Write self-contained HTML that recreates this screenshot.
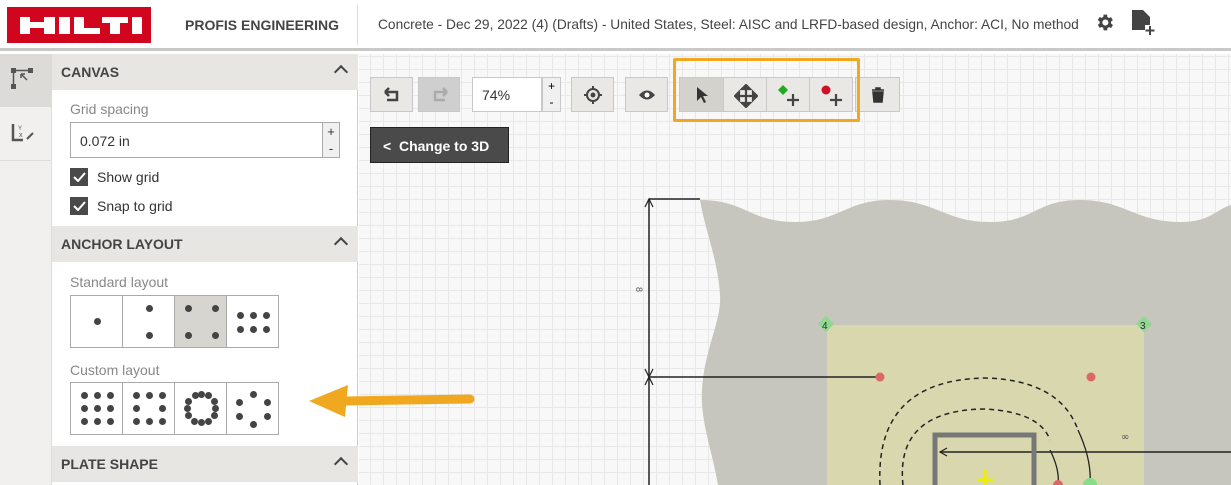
<!DOCTYPE html>
<html><head><style>
*{margin:0;padding:0;box-sizing:border-box}
body{width:1231px;height:485px;overflow:hidden;font-family:"Liberation Sans",Arial,sans-serif;background:#fff;position:relative}
.hdr{position:absolute;left:0;top:0;width:1231px;height:51px;background:#fff;border-bottom:3px solid #c8c8c8}
.logo{position:absolute;left:7px;top:7px;width:144px;height:36px;background:#d2051e}
.pe{position:absolute;left:185px;top:17px;font-size:14px;font-weight:bold;color:#444}
.sep{position:absolute;left:357px;top:5px;width:1px;height:40px;background:#ddd}
.title{position:absolute;left:378px;top:17px;font-size:13.75px;color:#444}
.side{position:absolute;left:0;top:54px;width:52px;height:431px;background:#f1f0ee;border-right:1px solid #ddd}
.panel{position:absolute;left:52px;top:54px;width:306px;height:431px;background:#fff;border-right:1px solid #ccc}
.sh{position:absolute;left:0;width:306px;height:36px;background:#e7e6e2;font-size:14px;font-weight:bold;color:#444;padding:10px 9px}
.car{position:absolute;right:12px;top:13px;width:10px;height:10px;border-left:2.5px solid #444;border-top:2.5px solid #444;transform:rotate(45deg)}
.lbl{position:absolute;left:18px;font-size:14px;color:#888}
.cb{position:absolute;left:18px;width:18px;height:18px;background:#4a4a4a}
.cbt{position:absolute;left:45px;font-size:14px;color:#333}
.grid4{position:absolute;left:18px;display:flex}
.grid4 div{width:53px;height:53px;border:1px solid #aaa;margin-right:-1px;position:relative;background:#fff}
.d{position:absolute;width:7px;height:7px;border-radius:50%;background:#444}
.canvas{position:absolute;left:359px;top:54px;width:872px;height:431px;background-color:#f8f8f8;
background-image:linear-gradient(#e8e8e8 1px,transparent 1px),linear-gradient(90deg,#e8e8e8 1px,transparent 1px);background-size:13px 13px;background-position:-2px 2px;overflow:hidden}
.btn{position:absolute;top:23px;height:35px;background:#e9e8e4;border:1px solid #c8c8c8}
</style></head><body>
<div class="hdr">
 <div class="logo"><svg width="144" height="36" viewBox="0 0 144 36"><g fill="#fff"><rect x="13" y="10" width="10" height="17"/><rect x="23" y="15" width="14" height="6"/><rect x="37" y="10" width="11" height="17"/><rect x="52" y="10" width="11" height="17"/><rect x="67" y="10" width="10" height="17"/><rect x="77" y="21" width="16" height="6"/><rect x="95" y="10" width="26" height="6"/><rect x="103" y="16" width="10" height="11"/><rect x="125" y="10" width="10" height="17"/></g></svg></div>
 <div class="pe">PROFIS ENGINEERING</div>
 <div class="sep"></div>
 <div class="title">Concrete - Dec 29, 2022 (4) (Drafts) - United States, Steel: AISC and LRFD-based design, Anchor: ACI, No method</div>
 <svg style="position:absolute;left:1094px;top:12px" width="21" height="21" viewBox="0 0 24 24"><path fill="#444" d="M19.4 13a7.5 7.5 0 0 0 0-2l2.1-1.6-2-3.5-2.5 1a7 7 0 0 0-1.700-1L15 3h-4l-.4 2.7a7 7 0 0 0-1.7 1l-2.5-1-2 3.5L6.5 11a7.5 7.5 0 0 0 0 2l-2.1 1.6 2 3.5 2.5-1a7 7 0 0 0 1.7 1L11 21h4l.4-2.7a7 7 0 0 0 1.7-1l2.5 1 2-3.5zM13 15.5a3.5 3.5 0 1 1 0-7 3.5 3.5 0 0 1 0 7z"/></svg>
 <svg style="position:absolute;left:1131px;top:10px" width="25" height="26" viewBox="0 0 25 26"><path fill="#444" d="M1 0h11l7 7v8h-5v5H1z"/><path stroke="#444" stroke-width="2" d="M19 16v9M14.5 20.5h9"/></svg>
</div>
<div class="side">
 <div style="position:absolute;left:0;top:0;width:52px;height:53px;background:#dcdbd7"></div>
 <svg style="position:absolute;left:11px;top:14px" width="24" height="22"><rect x="0" y="0" width="5" height="5" fill="#555"/><rect x="17" y="0" width="5" height="5" fill="#555"/><rect x="0" y="16" width="5" height="5" fill="#555"/><path d="M5 2.5h12M2.5 5v11M10 6l6 6M10 6v4M10 6h4" stroke="#555" stroke-width="1.5" fill="none"/></svg>
 <div style="position:absolute;left:0;top:106px;width:52px;height:1px;background:#ddd"></div>
 <svg style="position:absolute;left:11px;top:68px" width="26" height="22"><path d="M2 2v16h10" stroke="#555" stroke-width="2.5" fill="none"/><text x="7" y="8" font-size="6" fill="#555" font-family="Liberation Sans">Y</text><text x="8" y="15" font-size="7" fill="#555" font-family="Liberation Sans">x</text><path d="M16 17l6-6" stroke="#555" stroke-width="2"/></svg>
</div>
<div class="panel">
 <div class="sh" style="top:0">CANVAS<span class="car"></span></div>
 <div class="lbl" style="top:47px">Grid spacing</div>
 <div style="position:absolute;left:18px;top:68px;width:270px;height:36px;border:1px solid #aaa;font-size:14px;color:#333;padding:10px 9px">0.072 in</div>
 <div style="position:absolute;left:270px;top:68px;width:18px;height:36px;border:1px solid #aaa;background:#f0f0f0;font-size:13px;text-align:center;line-height:17px;color:#333">+<br>-</div>
 <div class="cb" style="top:114px"></div><svg style="position:absolute;left:21px;top:118px" width="13" height="10"><path d="M1 5l4 4 7-8" stroke="#fff" stroke-width="2" fill="none"/></svg><div class="cbt" style="top:115px">Show grid</div>
 <div class="cb" style="top:143px"></div><svg style="position:absolute;left:21px;top:147px" width="13" height="10"><path d="M1 5l4 4 7-8" stroke="#fff" stroke-width="2" fill="none"/></svg><div class="cbt" style="top:144px">Snap to grid</div>
 <div class="sh" style="top:172px">ANCHOR LAYOUT<span class="car"></span></div>
 <div class="lbl" style="top:220px">Standard layout</div>
 <div class="grid4" style="top:241px">
  <div><span class="d" style="left:23px;top:22px"></span></div>
  <div><span class="d" style="left:23px;top:9px"></span><span class="d" style="left:23px;top:36px"></span></div>
  <div style="background:#d6d5d0"><span class="d" style="left:10px;top:9px"></span><span class="d" style="left:37px;top:9px"></span><span class="d" style="left:10px;top:36px"></span><span class="d" style="left:37px;top:36px"></span></div>
  <div><span class="d" style="left:10px;top:16px"></span><span class="d" style="left:23px;top:16px"></span><span class="d" style="left:36px;top:16px"></span><span class="d" style="left:10px;top:30px"></span><span class="d" style="left:23px;top:30px"></span><span class="d" style="left:36px;top:30px"></span></div>
 </div>
 <div class="lbl" style="top:308px">Custom layout</div>
 <div class="grid4" style="top:328px">
  <div><span class="d" style="left:10px;top:9px"></span><span class="d" style="left:23px;top:9px"></span><span class="d" style="left:36px;top:9px"></span><span class="d" style="left:10px;top:22px"></span><span class="d" style="left:23px;top:22px"></span><span class="d" style="left:36px;top:22px"></span><span class="d" style="left:10px;top:35px"></span><span class="d" style="left:23px;top:35px"></span><span class="d" style="left:36px;top:35px"></span></div>
  <div><span class="d" style="left:10px;top:9px"></span><span class="d" style="left:23px;top:9px"></span><span class="d" style="left:36px;top:9px"></span><span class="d" style="left:10px;top:22px"></span><span class="d" style="left:36px;top:22px"></span><span class="d" style="left:10px;top:35px"></span><span class="d" style="left:23px;top:35px"></span><span class="d" style="left:36px;top:35px"></span></div>
  <div><span class="d" style="left:17px;top:9px"></span><span class="d" style="left:23px;top:8px"></span><span class="d" style="left:30px;top:9px"></span><span class="d" style="left:10px;top:15px"></span><span class="d" style="left:36px;top:15px"></span><span class="d" style="left:9px;top:22px"></span><span class="d" style="left:37px;top:22px"></span><span class="d" style="left:10px;top:29px"></span><span class="d" style="left:36px;top:29px"></span><span class="d" style="left:16px;top:35px"></span><span class="d" style="left:23px;top:36px"></span><span class="d" style="left:30px;top:35px"></span></div>
  <div><span class="d" style="left:23px;top:8px"></span><span class="d" style="left:9px;top:16px"></span><span class="d" style="left:37px;top:16px"></span><span class="d" style="left:9px;top:30px"></span><span class="d" style="left:37px;top:30px"></span><span class="d" style="left:23px;top:38px"></span></div>
 </div>
 <div class="sh" style="top:392px">PLATE SHAPE<span class="car"></span></div>
</div>
<div class="canvas">
 <svg style="position:absolute;left:0;top:0" width="872" height="431" viewBox="359 54 872 431">
  <path d="M700 200 C745 200 750 222 795 222 C840 222 845 200 890 200 C935 200 945 222 990 222 C1035 222 1035 200 1080 200 C1125 200 1135 222 1180 222 C1210 222 1215 210 1231 205 V485 H718 C712 450 700 420 702 390 C704 350 722 320 720 295 C718 260 705 230 700 200Z" fill="#c6c5be"/>
  <rect x="827" y="325" width="317" height="160" fill="#d9d7ae"/>
  <path d="M649 199H700M649 199V485M649 377H880M1231 452H940" stroke="#222" stroke-width="1.5" fill="none"/>
  <path d="M645 207l4-8 4 8M645 369l4 8 4-8M645 385l4-8 4 8M947 448l-7 4 7 4" stroke="#222" stroke-width="1.2" fill="none"/>
  <circle cx="880" cy="377" r="4.5" fill="#d66"/><circle cx="1091" cy="377" r="4.5" fill="#d66"/>
  <path d="M880 485 Q875 380 985 378 Q1060 380 1078 430 M903 485 Q895 410 985 409 Q1040 412 1050 440" stroke="#222" stroke-width="1.5" stroke-dasharray="5 4" fill="none"/>
  <path d="M1078 430 Q1092 460 1090 485M1050 450 Q1060 470 1058 485" stroke="#222" stroke-width="1.3" fill="none"/>
  <rect x="935" y="435" width="99" height="60" fill="none" stroke="#777" stroke-width="5"/>
  <circle cx="1058" cy="485" r="5" fill="#d66"/><circle cx="1090" cy="485" r="7" fill="#8d8"/>
  <path d="M985 470v15M977 480h16" stroke="#ee0" stroke-width="3"/>
  <path d="M826 316l8 8-8 8-8-8z M1144 316l8 8-8 8-8-8z" fill="#8fd88f"/>
  <text x="822" y="329" font-size="10" font-family="Liberation Sans" fill="#333">4</text>
  <text x="1140" y="329" font-size="10" font-family="Liberation Sans" fill="#333">3</text>
  <text x="636" y="287" font-size="9" fill="#555" transform="rotate(90 636 287)" font-family="Liberation Sans">8</text>
  <text x="1121" y="440" font-size="10" fill="#555" font-family="DejaVu Sans">∞</text>
 </svg>
 <div class="btn" style="left:11px;width:43px"><svg style="margin:9px 12px" width="18" height="16"><path d="M2 5h12v8H4M2 5l4-4M2 5l4 4" stroke="#444" stroke-width="2.5" fill="none"/></svg></div>
 <div class="btn" style="left:59px;width:42px;background:#cfcfcf"><svg style="margin:9px 12px" width="18" height="16"><path d="M16 5H4v8h10M16 5l-4-4M16 5l-4 4" stroke="#aaa" stroke-width="2.5" fill="none"/></svg></div>
 <div class="btn" style="left:113px;width:70px;background:#fff;font-size:14px;color:#333;padding:9px 0 0 9px">74%</div>
 <div style="position:absolute;left:183px;top:23px;width:19px;height:35px;border:1px solid #c8c8c8;background:#f0f0f0;font-size:12px;text-align:center;line-height:16px">+<br>-</div>
 <div class="btn" style="left:212px;width:43px"><svg style="margin:8px 12px" width="18" height="18"><circle cx="9" cy="9" r="6" stroke="#444" stroke-width="2" fill="none"/><circle cx="9" cy="9" r="2.5" fill="#444"/><path d="M9 0v3M9 15v3M0 9h3M15 9h3" stroke="#444" stroke-width="2"/></svg></div>
 <div class="btn" style="left:266px;width:43px"><svg style="margin:10px 12px" width="18" height="14"><path d="M1 7Q9-2 17 7Q9 16 1 7z" fill="#444"/><circle cx="9" cy="7" r="2.5" fill="#fff"/></svg></div>
 <div class="btn" style="left:320px;width:45px;background:#d3d2cc"><svg style="margin:8px 15px" width="14" height="18"><path d="M2 1v14l4-4 3 6 2-1-3-6h5z" fill="#333"/></svg></div>
 <div class="btn" style="left:364px;width:44px"><svg style="margin:6px 10px" width="24" height="24"><path d="M12 1v22M1 12h22M12 1l-4 4h8zM12 23l-4-4h8zM1 12l4-4v8zM23 12l-4-4v8z" stroke="#444" stroke-width="2.2" fill="#444"/></svg></div>
 <div class="btn" style="left:407px;width:44px"><svg style="margin:6px 10px" width="26" height="24"><path d="M6 1l5 5-5 5-5-5z" fill="#2a2"/><path d="M16 10v12M10 16h12" stroke="#444" stroke-width="2.2"/></svg></div>
 <div class="btn" style="left:450px;width:44px"><svg style="margin:6px 10px" width="26" height="24"><circle cx="6" cy="6" r="4.5" fill="#d01025"/><path d="M16 10v12M10 16h12" stroke="#444" stroke-width="2.2"/></svg></div>
 <div class="btn" style="left:496px;width:45px"><svg style="margin:9px 15px" width="14" height="16"><path d="M1 3h12M5 3V1h4v2M2 5h10l-1 10H3z" stroke="#333" stroke-width="1.5" fill="#333"/></svg></div>
 <div style="position:absolute;left:314px;top:4px;width:187px;height:64px;border:3px solid #f0a820;border-radius:2px"></div>
 <div style="position:absolute;left:11px;top:73px;width:139px;height:36px;background:#4b4a4a;border:1px solid #222;color:#fff;font-size:14px;font-weight:bold;padding:10px 0 0 12px">&lt;&nbsp; Change to 3D</div>
</div>
<svg style="position:absolute;left:305px;top:380px" width="175" height="45"><path d="M165 19L40 21" stroke="#f0a820" stroke-width="9" stroke-linecap="round"/><path d="M4 21L43 5L40 37z" fill="#f0a820"/></svg>
</body></html>
